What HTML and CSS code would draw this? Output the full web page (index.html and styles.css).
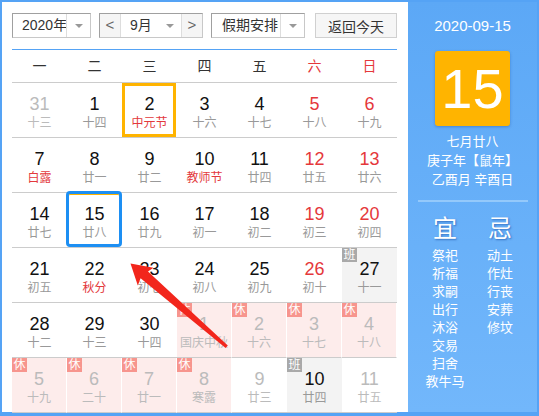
FILE: index.html
```html
<!DOCTYPE html>
<html lang="zh-CN">
<head>
    <meta charset="UTF-8">
    <title>万年历</title>
    <link rel="stylesheet" href="styles.css">
</head>
<body>
    <div class="calendar">
        <!-- Left: month view -->
        <div class="main">
            <div class="toolbar">
                <div class="select year">
                    <span class="value">2020年</span>
                    <span class="caret"></span>
                </div>
                <div class="select month">
                    <span class="step">&lt;</span>
                    <span class="value">9月</span>
                    <span class="caret"></span>
                    <span class="step">&gt;</span>
                </div>
                <div class="select holiday">
                    <span class="value">假期安排</span>
                    <span class="caret"></span>
                </div>
                <button class="today-btn">返回今天</button>
            </div>

            <div class="week">
                <span>一</span><span>二</span><span>三</span><span>四</span><span>五</span>
                <span class="weekend">六</span><span class="weekend">日</span>
            </div>

            <div class="days">
                <div class="day other"><span class="num">31</span><span class="lunar">十三</span></div>
                <div class="day"><span class="num">1</span><span class="lunar">十四</span></div>
                <div class="day festday"><span class="num">2</span><span class="lunar fest">中元节</span></div>
                <div class="day"><span class="num">3</span><span class="lunar">十六</span></div>
                <div class="day"><span class="num">4</span><span class="lunar">十七</span></div>
                <div class="day weekend"><span class="num">5</span><span class="lunar">十八</span></div>
                <div class="day weekend"><span class="num">6</span><span class="lunar">十九</span></div>

                <div class="day"><span class="num">7</span><span class="lunar fest">白露</span></div>
                <div class="day"><span class="num">8</span><span class="lunar">廿一</span></div>
                <div class="day"><span class="num">9</span><span class="lunar">廿二</span></div>
                <div class="day"><span class="num">10</span><span class="lunar fest">教师节</span></div>
                <div class="day"><span class="num">11</span><span class="lunar">廿四</span></div>
                <div class="day weekend"><span class="num">12</span><span class="lunar">廿五</span></div>
                <div class="day weekend"><span class="num">13</span><span class="lunar">廿六</span></div>

                <div class="day"><span class="num">14</span><span class="lunar">廿七</span></div>
                <div class="day selected"><span class="num">15</span><span class="lunar">廿八</span></div>
                <div class="day"><span class="num">16</span><span class="lunar">廿九</span></div>
                <div class="day"><span class="num">17</span><span class="lunar">初一</span></div>
                <div class="day"><span class="num">18</span><span class="lunar">初二</span></div>
                <div class="day weekend"><span class="num">19</span><span class="lunar">初三</span></div>
                <div class="day weekend"><span class="num">20</span><span class="lunar">初四</span></div>

                <div class="day"><span class="num">21</span><span class="lunar">初五</span></div>
                <div class="day"><span class="num">22</span><span class="lunar fest">秋分</span></div>
                <div class="day"><span class="num">23</span><span class="lunar">初七</span></div>
                <div class="day"><span class="num">24</span><span class="lunar">初八</span></div>
                <div class="day"><span class="num">25</span><span class="lunar">初九</span></div>
                <div class="day weekend"><span class="num">26</span><span class="lunar">初十</span></div>
                <div class="day work"><i class="tag">班</i><span class="num">27</span><span class="lunar">十一</span></div>

                <div class="day"><span class="num">28</span><span class="lunar">十二</span></div>
                <div class="day"><span class="num">29</span><span class="lunar">十三</span></div>
                <div class="day"><span class="num">30</span><span class="lunar">十四</span></div>
                <div class="day other rest"><i class="tag">休</i><span class="num">1</span><span class="lunar">国庆中秋</span></div>
                <div class="day other rest"><i class="tag">休</i><span class="num">2</span><span class="lunar">十六</span></div>
                <div class="day other rest"><i class="tag">休</i><span class="num">3</span><span class="lunar">十七</span></div>
                <div class="day other rest"><i class="tag">休</i><span class="num">4</span><span class="lunar">十八</span></div>

                <div class="day other rest"><i class="tag">休</i><span class="num">5</span><span class="lunar">十九</span></div>
                <div class="day other rest"><i class="tag">休</i><span class="num">6</span><span class="lunar">二十</span></div>
                <div class="day other rest"><i class="tag">休</i><span class="num">7</span><span class="lunar">廿一</span></div>
                <div class="day other rest"><i class="tag">休</i><span class="num">8</span><span class="lunar">寒露</span></div>
                <div class="day other"><span class="num">9</span><span class="lunar">廿三</span></div>
                <div class="day other work"><i class="tag">班</i><span class="num">10</span><span class="lunar">廿四</span></div>
                <div class="day other"><span class="num">11</span><span class="lunar">廿五</span></div>
            </div>
        </div>

        <!-- Right: selected day details -->
        <div class="side">
            <div class="side-date">2020-09-15</div>
            <div class="side-day">15</div>
            <div class="side-lunar">七月廿八</div>
            <div class="side-lunar">庚子年【鼠年】</div>
            <div class="side-lunar">乙酉月 辛酉日</div>
            <div class="divider"></div>
            <div class="yiji">
                <div class="col">
                    <h4>宜</h4>
                    <ul>
                        <li>祭祀</li><li>祈福</li><li>求嗣</li><li>出行</li>
                        <li>沐浴</li><li>交易</li><li>扫舍</li><li>教牛马</li>
                    </ul>
                </div>
                <div class="col">
                    <h4>忌</h4>
                    <ul>
                        <li>动土</li><li>作灶</li><li>行丧</li><li>安葬</li><li>修坟</li>
                    </ul>
                </div>
            </div>
        </div>
    </div>

    <!-- Annotation arrow -->
    <svg class="arrow" width="539" height="416" viewBox="0 0 539 416">
        <polygon points="130.5,263.5 153.4,267.8 148,271.6 227.8,345.5 225.6,347.9 140.6,278.2 137.8,285.6" fill="#f2261c"/>
    </svg>
</body>
</html>
```

FILE: styles.css
```css
/* Basic Reset */
* {
    box-sizing: border-box;
}

body {
    margin: 0;
    font-family: "Liberation Sans", "Noto Sans CJK SC", sans-serif;
    color: #111;
}

.calendar {
    width: 539px;
    height: 416px;
    display: flex;
    border: 2px solid #55a3f5;
    border-bottom-width: 4px;
}

/* Month view */
.main {
    width: 406px;
    padding: 11px 11px 0 10px;
    background-color: #fff;
}

.toolbar {
    display: flex;
    height: 25px;
    font-size: 14px;
    color: #333;
    border-bottom: 1px solid #55a3f5;
    box-sizing: content-box;
    padding-bottom: 11px;
}

.select {
    display: flex;
    align-items: stretch;
    height: 25px;
    border: 1px solid;
    border-color: #a0a0a0 #c8c8c8 #c8c8c8 #a0a0a0;
    background-color: #fff;
    margin-right: 8px;
}

.select .value {
    flex: none;
    white-space: nowrap;
    line-height: 23px;
    padding-left: 9px;
}

.caret {
    flex: none;
    position: relative;
    width: 24px;
    border-left: 1px solid #ddd;
}

.caret::after {
    content: "";
    position: absolute;
    left: 8px;
    top: 10px;
    border-left: 4px solid transparent;
    border-right: 4px solid transparent;
    border-top: 4px solid #999;
}

.year {
    width: 79px;
}

.year .value {
    width: 53px;
}

.month {
    width: 104px;
}

.month .value {
    width: 37px;
}

.month .caret {
    border-left: none;
    width: 23px;
}

.month .step {
    flex: none;
    width: 21px;
    text-align: center;
    line-height: 22px;
    background-color: #f5f5f5;
    color: #666;
    font-size: 15px;
}

.month .step:first-child {
    border-right: 1px solid #ddd;
}

.month .step:last-child {
    border-left: 1px solid #ddd;
}

.holiday {
    width: 94px;
    margin-right: 10px;
}

.holiday .value {
    width: 68px;
    padding-left: 10px;
}

.today-btn {
    width: 82px;
    height: 25px;
    padding: 0;
    border: 1px solid #d0d0d0;
    background-color: #f6f6f6;
    font-family: inherit;
    font-size: 14px;
    color: #333;
}

/* Weekday header */
.week {
    display: grid;
    grid-template-columns: repeat(7, 55px);
    height: 33px;
    border-bottom: 1px solid #ccc;
}

.week span {
    text-align: center;
    line-height: 32px;
    font-size: 14px;
    color: #333;
}

.week .weekend {
    color: #e5383b;
}

/* Day cells */
.days {
    display: grid;
    grid-template-columns: repeat(7, 55px);
    grid-auto-rows: 55px;
}

.day {
    position: relative;
    text-align: center;
    border-bottom: 1px solid #ccc;
}

.num {
    display: block;
    padding-top: 11px;
    font-size: 18px;
    line-height: 20px;
}

.lunar {
    display: block;
    margin-top: 1px;
    font-size: 12px;
    line-height: 16px;
    color: #999;
}

.weekend .num {
    color: #e5383b;
}

.lunar.fest {
    color: #e3393c;
}

.other .num,
.other .lunar {
    color: #bbb;
}

.other.work .num {
    color: #111;
}

.other.work .lunar {
    color: #999;
}

.rest {
    background-color: #fdeceb;
    border-right: 1px solid #fff;
}

.work {
    background-color: #f3f3f3;
}

.tag {
    position: absolute;
    left: 0;
    top: 0;
    width: 15px;
    height: 14px;
    line-height: 14px;
    font-size: 12px;
    font-style: normal;
    color: #fff;
    background-color: #f7958e;
}

.work .tag {
    background-color: #a9a9a9;
}

.festday::after {
    content: "";
    position: absolute;
    left: 0;
    top: 0;
    right: 1px;
    bottom: 0;
    border: 3px solid #ffb400;
}

.selected::after {
    content: "";
    position: absolute;
    left: -1px;
    top: -2px;
    right: 0;
    bottom: 0;
    border: 3px solid #1d8ff3;
    border-radius: 4px;
    box-shadow: inset 0 1px 0 #ffb400;
}

/* Detail panel */
.side {
    flex: 1;
    background: linear-gradient(#5ca8f6, #72b7fb);
    color: #fff;
    text-align: center;
}

.side-date {
    margin-top: 14px;
    font-size: 15px;
    line-height: 20px;
}

.side-day {
    width: 75px;
    height: 75px;
    margin: 15px auto 6px;
    background-color: #ffb400;
    border-radius: 3px;
    font-size: 56px;
    line-height: 75px;
    box-shadow: 0 1px 3px rgba(0, 40, 120, 0.3);
}

.side-lunar {
    font-size: 13px;
    line-height: 19px;
}

.divider {
    margin: 11px 9px 0 10px;
    border-top: 2px solid #94c9fb;
}

.yiji {
    display: flex;
    justify-content: center;
}

.yiji .col {
    width: 55px;
}

.yiji h4 {
    margin: 12px 0 3px;
    font-size: 24px;
    line-height: 30px;
    font-weight: normal;
    text-shadow: 1px 1px 2px rgba(0, 50, 140, 0.5);
}

.yiji ul {
    list-style: none;
    margin: 0;
    padding: 0;
}

.yiji li {
    font-size: 13px;
    line-height: 18px;
    white-space: nowrap;
}

/* Annotation */
.arrow {
    position: absolute;
    left: 0;
    top: 0;
    pointer-events: none;
}
```
